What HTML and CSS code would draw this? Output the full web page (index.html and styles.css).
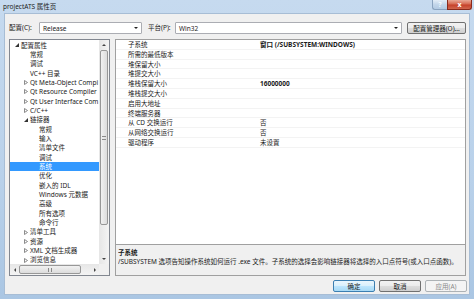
FILE: index.html
```html
<!DOCTYPE html>
<html>
<head>
    <meta charset="utf-8">
    <link rel="stylesheet" href="styles.css">
</head>
<body>
    <div class="window">
        <div class="titlebar">
            <span class="title">projectATS 属性页</span>
            <div class="caption-buttons">
                <span class="cap-btn help">?</span>
                <span class="cap-btn close">x</span>
            </div>
        </div>

        <div class="client">
            <div class="config-row">
                <span class="field-label cfg-label">配置(C):</span>
                <div class="combo cfg-combo"><span>Release</span><span class="arrow"></span></div>
                <span class="field-label plat-label">平台(P):</span>
                <div class="combo plat-combo"><span>Win32</span><span class="arrow"></span></div>
                <button class="btn mgr-btn">配置管理器(O)...</button>
            </div>

            <div class="main">
                <div class="tree">
                    <div class="tree-body">
                        <div class="tree-list">
                            <div class="node l0"><span class="exp"><svg width="4" height="4"><polygon points="4,0 4,4 0,4" fill="#333"/></svg></span>配置属性</div>
                            <div class="node l1"><span class="exp"></span>常规</div>
                            <div class="node l1"><span class="exp"></span>调试</div>
                            <div class="node l1"><span class="exp"></span>VC++ 目录</div>
                            <div class="node l1"><span class="exp"><svg width="4" height="5"><polygon points="0.5,0.5 3.5,2.5 0.5,4.5" fill="none" stroke="#6e6e6e" stroke-width="0.8"/></svg></span>Qt Meta-Object Compi</div>
                            <div class="node l1"><span class="exp"><svg width="4" height="5"><polygon points="0.5,0.5 3.5,2.5 0.5,4.5" fill="none" stroke="#6e6e6e" stroke-width="0.8"/></svg></span>Qt Resource Compiler</div>
                            <div class="node l1"><span class="exp"><svg width="4" height="5"><polygon points="0.5,0.5 3.5,2.5 0.5,4.5" fill="none" stroke="#6e6e6e" stroke-width="0.8"/></svg></span>Qt User Interface Com</div>
                            <div class="node l1"><span class="exp"><svg width="4" height="5"><polygon points="0.5,0.5 3.5,2.5 0.5,4.5" fill="none" stroke="#6e6e6e" stroke-width="0.8"/></svg></span>C/C++</div>
                            <div class="node l1"><span class="exp"><svg width="4" height="4"><polygon points="4,0 4,4 0,4" fill="#333"/></svg></span>链接器</div>
                            <div class="node l2"><span class="exp"></span>常规</div>
                            <div class="node l2"><span class="exp"></span>输入</div>
                            <div class="node l2"><span class="exp"></span>清单文件</div>
                            <div class="node l2"><span class="exp"></span>调试</div>
                            <div class="node l2 selected"><span class="exp"></span>系统</div>
                            <div class="node l2"><span class="exp"></span>优化</div>
                            <div class="node l2"><span class="exp"></span>嵌入的 IDL</div>
                            <div class="node l2"><span class="exp"></span>Windows 元数据</div>
                            <div class="node l2"><span class="exp"></span>高级</div>
                            <div class="node l2"><span class="exp"></span>所有选项</div>
                            <div class="node l2"><span class="exp"></span>命令行</div>
                            <div class="node l1"><span class="exp"><svg width="4" height="5"><polygon points="0.5,0.5 3.5,2.5 0.5,4.5" fill="none" stroke="#6e6e6e" stroke-width="0.8"/></svg></span>清单工具</div>
                            <div class="node l1"><span class="exp"><svg width="4" height="5"><polygon points="0.5,0.5 3.5,2.5 0.5,4.5" fill="none" stroke="#6e6e6e" stroke-width="0.8"/></svg></span>资源</div>
                            <div class="node l1"><span class="exp"><svg width="4" height="5"><polygon points="0.5,0.5 3.5,2.5 0.5,4.5" fill="none" stroke="#6e6e6e" stroke-width="0.8"/></svg></span>XML 文档生成器</div>
                            <div class="node l1"><span class="exp"><svg width="4" height="5"><polygon points="0.5,0.5 3.5,2.5 0.5,4.5" fill="none" stroke="#6e6e6e" stroke-width="0.8"/></svg></span>浏览信息</div>
                        </div>
                        <div class="vscroll">
                            <div class="sb-arrow"><span class="tri-up"></span></div>
                            <div class="vthumb"><span class="grip"></span></div>
                            <div class="vtrack"></div>
                            <div class="sb-arrow"><span class="tri-down"></span></div>
                        </div>
                    </div>
                    <div class="hscroll-row">
                        <div class="hscroll">
                            <div class="sb-arrow h"><span class="tri-left"></span></div>
                            <div class="hthumb"><span class="grip"></span></div>
                            <div class="htrack"></div>
                            <div class="sb-arrow h"><span class="tri-right"></span></div>
                        </div>
                        <div class="corner"></div>
                    </div>
                </div>

                <div class="props">
                    <div class="grid">
                        <div class="prop-row"><span class="prop-name">子系统</span><span class="prop-value bold">窗口 (/SUBSYSTEM:WINDOWS)</span></div>
                        <div class="prop-row"><span class="prop-name">所需的最低版本</span><span class="prop-value"></span></div>
                        <div class="prop-row"><span class="prop-name">堆保留大小</span><span class="prop-value"></span></div>
                        <div class="prop-row"><span class="prop-name">堆提交大小</span><span class="prop-value"></span></div>
                        <div class="prop-row"><span class="prop-name">堆栈保留大小</span><span class="prop-value bold">16000000</span></div>
                        <div class="prop-row"><span class="prop-name">堆栈提交大小</span><span class="prop-value"></span></div>
                        <div class="prop-row"><span class="prop-name">启用大地址</span><span class="prop-value"></span></div>
                        <div class="prop-row"><span class="prop-name">终端服务器</span><span class="prop-value"></span></div>
                        <div class="prop-row"><span class="prop-name">从 CD 交换运行</span><span class="prop-value">否</span></div>
                        <div class="prop-row"><span class="prop-name">从网络交换运行</span><span class="prop-value">否</span></div>
                        <div class="prop-row"><span class="prop-name">驱动程序</span><span class="prop-value">未设置</span></div>
                    </div>
                    <div class="desc">
                        <div class="desc-title">子系统</div>
                        <div class="desc-text">/SUBSYSTEM 选项告知操作系统如何运行 .exe 文件。子系统的选择会影响链接器将选择的入口点符号(或入口点函数)。</div>
                    </div>
                </div>
            </div>

            <div class="footer">
                <button class="btn dlg-btn default">确定</button>
                <button class="btn dlg-btn">取消</button>
                <button class="btn dlg-btn disabled">应用(A)</button>
            </div>
        </div>
    </div>
</body>
</html>
```

FILE: styles.css
```css
* {
    box-sizing: border-box;
}

html, body {
    margin: 0;
}

body {
    width: 474px;
    height: 299px;
    overflow: hidden;
    font-family: "Noto Sans", "Noto Sans CJK SC", sans-serif;
    font-size: 6.5px;
    color: #1a1a1a;
    background: linear-gradient(#c6daef, #b9d1ea 60%, #aac6e3);
}

.window {
    height: 299px;
    display: flex;
    flex-direction: column;
}

/* title bar */
.titlebar {
    height: 14px;
    display: flex;
    align-items: flex-start;
}

.title {
    flex: 1;
    padding-left: 3px;
    line-height: 14px;
    color: #222;
}

.caption-buttons {
    display: flex;
    margin-right: 2px;
}

.cap-btn {
    height: 10px;
    display: flex;
    align-items: center;
    justify-content: center;
    font-size: 7px;
    font-weight: bold;
    color: #fff;
    border: 1px solid;
    border-top: none;
}

.help {
    width: 15px;
    border-color: #8aa3bf;
    border-right: none;
    border-radius: 0 0 0 3px;
    background: linear-gradient(#e3edf7, #c3d6ea 50%, #b3cae3);
    color: #f4f8fc;
}

.close {
    width: 25px;
    border-color: #8a2b1c;
    border-radius: 0 0 3px 0;
    background: linear-gradient(#e9a996, #d66a52 45%, #c6412a 55%, #d0664d);
}

/* client area */
.client {
    flex: 1;
    margin: 0 5px 5px;
    padding: 8px 3px 2px 4px;
    background: #f0f0f0;
    box-shadow: 0 0 0 1px #a7bdd5;
    display: flex;
    flex-direction: column;
}

.config-row {
    height: 12px;
    display: flex;
    align-items: center;
}

.field-label {
    line-height: 12px;
    flex: none;
}

.cfg-label {
    width: 30px;
}

.plat-label {
    width: 27px;
    margin-left: 6px;
}

.combo {
    height: 12px;
    flex: none;
    display: flex;
    align-items: center;
    justify-content: space-between;
    padding: 0 3px 0 3px;
    background: #fff;
    border: 1px solid #abadb3;
    border-radius: 1px;
}

.cfg-combo {
    width: 103px;
}

.plat-combo {
    width: 227px;
}

.arrow {
    width: 0;
    height: 0;
    border-left: 2px solid transparent;
    border-right: 2px solid transparent;
    border-top: 2.5px solid #222;
}

.btn {
    font-family: inherit;
    font-size: 6.5px;
    color: #1a1a1a;
    padding: 0;
    height: 12px;
    border: 1px solid #707070;
    border-radius: 2px;
    background: linear-gradient(#f2f2f2, #ebebeb 50%, #dddddd 50%, #cfcfcf);
}

.mgr-btn {
    width: 59px;
    margin-left: 5px;
}

/* main area */
.main {
    height: 237px;
    margin-top: 5px;
    display: flex;
    gap: 5px;
}

.tree {
    width: 101px;
    flex: none;
    border: 1px solid #828790;
    background: #fff;
    display: flex;
    flex-direction: column;
}

.tree-body {
    flex: 1;
    display: flex;
    min-height: 0;
}

.tree-list {
    flex: 1;
    overflow: hidden;
    padding-top: 0.5px;
}

.node {
    height: 9.35px;
    line-height: 9.35px;
    display: flex;
    align-items: center;
    white-space: nowrap;
}

.node .exp {
    width: 6px;
    flex: none;
    display: flex;
    align-items: center;
}

.l0 {
    padding-left: 5px;
}

.l1 {
    padding-left: 14px;
}

.l2 {
    padding-left: 23px;
}

.node.selected {
    background: #3399ff;
    color: #fff;
}

/* scrollbars */
.vscroll {
    width: 10px;
    flex: none;
    display: flex;
    flex-direction: column;
    background: linear-gradient(90deg, #e6e6e6, #f4f4f4);
}

.sb-arrow {
    height: 10px;
    flex: none;
    display: flex;
    align-items: center;
    justify-content: center;
}

.sb-arrow.h {
    width: 9px;
    height: auto;
}

.vthumb {
    height: 175px;
    margin: 0 1px;
    border: 1px solid #979797;
    border-radius: 2px;
    background: linear-gradient(90deg, #f1f1f1, #dcdcdc);
    display: flex;
    align-items: center;
    justify-content: center;
}

.vthumb .grip {
    width: 4px;
    height: 4px;
    border-top: 1px solid #8a8a8a;
    border-bottom: 1px solid #8a8a8a;
}

.vtrack, .htrack {
    flex: 1;
}

.tri-up, .tri-down, .tri-left, .tri-right {
    width: 0;
    height: 0;
}

.tri-up {
    border-left: 2px solid transparent;
    border-right: 2px solid transparent;
    border-bottom: 2.5px solid #444;
}

.tri-down {
    border-left: 2px solid transparent;
    border-right: 2px solid transparent;
    border-top: 2.5px solid #444;
}

.tri-left {
    border-top: 2px solid transparent;
    border-bottom: 2px solid transparent;
    border-right: 2.5px solid #444;
}

.tri-right {
    border-top: 2px solid transparent;
    border-bottom: 2px solid transparent;
    border-left: 2.5px solid #444;
}

.hscroll-row {
    height: 11px;
    flex: none;
    display: flex;
}

.hscroll {
    flex: 1;
    display: flex;
    background: linear-gradient(#e6e6e6, #f4f4f4);
}

.hthumb {
    width: 62px;
    margin: 1px 0;
    border: 1px solid #979797;
    border-radius: 2px;
    background: linear-gradient(#f1f1f1, #dcdcdc);
    display: flex;
    align-items: center;
    justify-content: center;
}

.hthumb .grip {
    width: 4px;
    height: 4px;
    border-left: 1px solid #8a8a8a;
    border-right: 1px solid #8a8a8a;
}

.corner {
    width: 10px;
    background: #f0f0f0;
}

/* property grid */
.props {
    flex: 1;
    border: 1px solid #a0a0a0;
    display: flex;
    flex-direction: column;
}

.grid {
    flex: 1;
    background: #fff;
}

.prop-row {
    height: 9.8px;
    line-height: 9.8px;
    display: flex;
    white-space: nowrap;
    border-bottom: 1px solid #f3f3f3;
}

.prop-name {
    width: 144px;
    padding-left: 12px;
    flex: none;
}

.bold {
    font-weight: bold;
}

.desc {
    height: 31px;
    flex: none;
    border-top: 1px solid #a0a0a0;
    padding: 2.5px 2px 0;
    background: #f0f0f0;
}

.desc-title, .desc-text {
    line-height: 9px;
    white-space: nowrap;
    overflow: hidden;
}

.desc-title {
    font-weight: bold;
}

/* dialog buttons */
.footer {
    height: 12px;
    margin-top: 4px;
    margin-right: -1px;
    display: flex;
    justify-content: flex-end;
    gap: 4px;
}

.dlg-btn {
    width: 42px;
}

.dlg-btn.default {
    border-color: #3c7fb1;
    background: linear-gradient(#eaf6fd, #d9f0fc 50%, #bee6fd 50%, #a7d9f5);
}

.dlg-btn.disabled {
    color: #8a8a8a;
    border-color: #adb2b5;
    background: #f4f4f4;
}
```
